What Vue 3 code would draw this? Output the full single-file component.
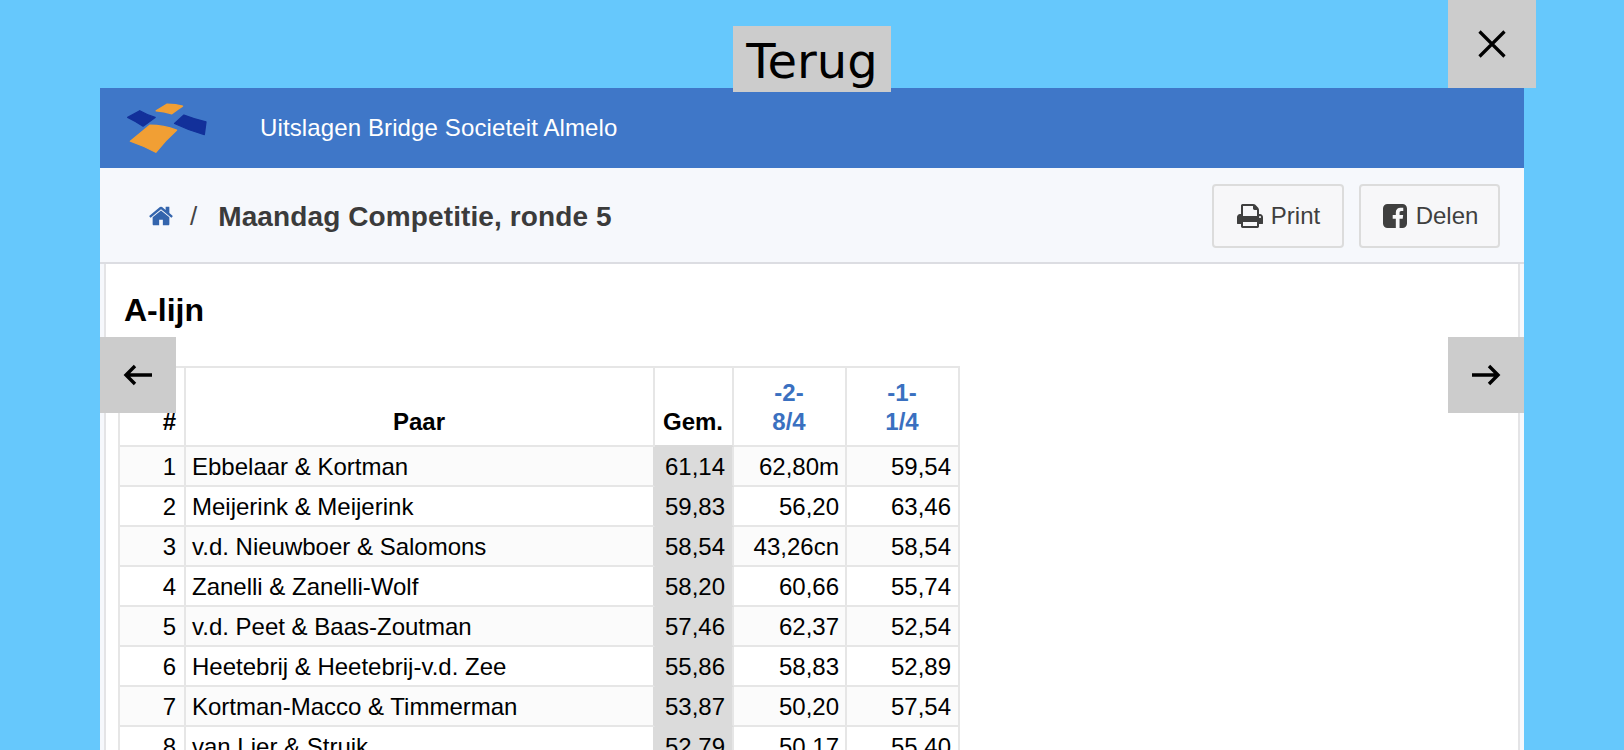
<script setup>
const rows = [
  [1, 'Ebbelaar & Kortman', '61,14', '62,80m', '59,54'],
  [2, 'Meijerink & Meijerink', '59,83', '56,20', '63,46'],
  [3, 'v.d. Nieuwboer & Salomons', '58,54', '43,26cn', '58,54'],
  [4, 'Zanelli & Zanelli-Wolf', '58,20', '60,66', '55,74'],
  [5, 'v.d. Peet & Baas-Zoutman', '57,46', '62,37', '52,54'],
  [6, 'Heetebrij & Heetebrij-v.d. Zee', '55,86', '58,83', '52,89'],
  [7, 'Kortman-Macco & Timmerman', '53,87', '50,20', '57,54'],
  [8, 'van Lier & Struik', '52,79', '50,17', '55,40'],
]
</script>

<template>
  <div class="page">
    <div class="panel">
      <header class="top">
        <svg class="logo" viewBox="100 60 260 170" aria-hidden="true">
          <g stroke-width="4" stroke-linejoin="round">
            <path fill="#f19f34" stroke="#f19f34" d="M199 92 L232 72 Q258 72 278 78 Q262 88 246 101 Q222 94 199 92Z" />
            <path fill="#12309a" stroke="#12309a" d="M114 112 L150 92 Q175 106 196 112 L160 138 Q135 122 114 112Z" />
            <path fill="#12309a" stroke="#12309a" d="M254 130 L282 105 Q315 118 348 125 L343 163 Q295 150 254 130Z" />
            <path fill="#f19f34" stroke="#f19f34" d="M122 183 Q150 160 180 135 Q222 135 260 150 Q228 178 198 216 Q158 195 122 183Z" />
          </g>
        </svg>
        <span class="site">Uitslagen Bridge Societeit Almelo</span>
      </header>
      <nav class="crumbs">
        <svg class="home" viewBox="0 0 1792 1792" aria-hidden="true"><path fill="currentColor" d="M1472 992v480q0 26-19 45t-45 19h-384v-384h-256v384h-384q-26 0-45-19t-19-45v-480q0-1 .5-3t.5-3l575-474 575 474q1 2 1 6zm223-69l-62 74q-8 9-21 11h-3q-13 0-21-7l-692-577-692 577q-12 8-24 7-13-2-21-11l-62-74q-8-10-7-23.500t11-21.500l719-599q32-26 76-26t76 26l244 204v-195q0-14 9-23t23-9h192q14 0 23 9t9 23v408l219 182q10 8 11 21.500t-7 23.500z"/></svg>
        <span class="sep">/</span>
        <strong class="title">Maandag Competitie, ronde 5</strong>
        <div class="actions">
          <button class="btn print">
            <svg viewBox="0 0 1792 1792" aria-hidden="true"><path fill="currentColor" d="M448 1536h896v-256h-896v256zm0-640h896v-384h-160q-40 0-68-28t-28-68v-160h-640v640zm1152 64q0-26-19-45t-45-19-45 19-19 45 19 45 45 19 45-19 19-45zm128 0v416q0 13-9.500 22.500t-22.500 9.500h-224v160q0 40-28 68t-68 28h-960q-40 0-68-28t-28-68v-160h-224q-13 0-22.500-9.500t-9.500-22.500v-416q0-79 56.500-135.500t135.500-56.500h64v-544q0-40 28-68t68-28h672q40 0 88 20t76 48l152 152q28 28 48 76t20 88v256h64q79 0 135.500 56.500t56.500 135.500z"/></svg>
            Print
          </button>
          <button class="btn delen">
            <svg viewBox="0 0 1792 1792" aria-hidden="true"><path fill="currentColor" d="M1376 128q119 0 203.500 84.500t84.500 203.500v960q0 119-84.500 203.500t-203.500 84.500h-188v-595h199l30-232h-229v-148q0-56 23.500-84t91.500-28l122-1v-207q-63-9-178-9-136 0-217.500 80t-81.500 226v171h-200v232h200v595h-532q-119 0-203.500-84.500t-84.500-203.500v-960q0-119 84.500-203.500t203.500-84.500h960z"/></svg>
            Delen
          </button>
        </div>
      </nav>
      <main class="frame">
        <div class="content">
          <h2 class="lijn">A-lijn</h2>
          <table class="results">
            <colgroup>
              <col class="c-nr" /><col class="c-paar" /><col class="c-gem" /><col class="c-r2" /><col class="c-r1" />
            </colgroup>
            <thead>
              <tr>
                <th class="nr">#</th>
                <th class="paar">Paar</th>
                <th class="gemh">Gem.</th>
                <th class="round">-2-<br />8/4</th>
                <th class="round">-1-<br />1/4</th>
              </tr>
            </thead>
            <tbody>
              <tr v-for="r in rows" :key="r[0]">
                <td class="num nr">{{ r[0] }}</td>
                <td class="paar">{{ r[1] }}</td>
                <td class="num gem">{{ r[2] }}</td>
                <td class="num r2">{{ r[3] }}</td>
                <td class="num">{{ r[4] }}</td>
              </tr>
            </tbody>
          </table>
        </div>
      </main>
    </div>

    <button class="terug">Terug</button>
    <button class="ctl close" aria-label="Sluiten">
      <svg viewBox="0 0 30 30" aria-hidden="true"><path d="M2.500 2.500 L27.500 27.500 M27.500 2.500 L2.500 27.500" fill="none" stroke="#000" stroke-width="3.200" /></svg>
    </button>
    <button class="ctl prev" aria-label="Vorige">
      <svg viewBox="0 0 30 22" aria-hidden="true"><path d="M29 11 H3 M12 2 L3 11 L12 20" fill="none" stroke="#000" stroke-width="3.400" /></svg>
    </button>
    <button class="ctl next" aria-label="Volgende">
      <svg viewBox="0 0 30 22" aria-hidden="true"><path d="M1 11 H27 M18 2 L27 11 L18 20" fill="none" stroke="#000" stroke-width="3.400" /></svg>
    </button>
  </div>
</template>

<style>
html, body { margin: 0; height: 100%; overflow: hidden; background: #66c8fc; }
</style>

<style scoped>
.page {
  position: relative;
  height: 750px;
  overflow: hidden;
  background: #66c8fc;
  padding-top: 88px;
  box-sizing: border-box;
  font-family: "Liberation Sans", Arial, sans-serif;
}
.panel {
  margin: 0 100px;
  background: #f6f8fc;
  height: 700px;
}
.top {
  height: 80px;
  background: #3f77c8;
  display: flex;
  align-items: center;
  padding-left: 23px;
  box-sizing: border-box;
}
.logo {
  width: 87px;
  height: 57px;
}
.site {
  margin-left: 50px;
  color: #fff;
  font-size: 24px;
  letter-spacing: 0.12px;
}
.crumbs {
  height: 96px;
  display: flex;
  align-items: center;
  box-sizing: border-box;
  border-bottom: 2px solid #dcdde2;
  padding: 2px 24px 0 48px;
}
.home {
  width: 26px;
  height: 26px;
  color: #3465ad;
}
.sep {
  margin-left: 16px;
  font-size: 26px;
  color: #444;
}
.title {
  margin: 2px 0 0 21px;
  font-size: 28px;
  letter-spacing: 0.11px;
  color: #3b3b3b;
}
.actions {
  margin-left: auto;
  display: flex;
  gap: 15px;
}
.btn {
  height: 64px;
  display: flex;
  align-items: center;
  justify-content: center;
  gap: 7px;
  box-sizing: border-box;
  border: 2px solid #dcdcdc;
  border-radius: 4px;
  background: #f7f7f9;
  color: #3f3f3f;
  font-family: inherit;
  font-size: 24px;
  padding: 0;
}
.btn svg { width: 28px; height: 28px; }
.print { width: 132px; }
.delen { width: 141px; }
.frame {
  margin: 0 4px;
  border-left: 2px solid #e4e4e6;
  border-right: 2px solid #e4e4e6;
  background: #fff;
  height: 486px;
  overflow: hidden;
}
.content { padding-left: 12px; }
.lijn {
  margin: 0;
  padding: 28px 0 0 6px;
  height: 74px;
  box-sizing: content-box;
  font-size: 32px;
  line-height: 36px;
  color: #000;
}
.results {
  border-collapse: separate;
  border-spacing: 0;
  border-top: 2px solid #e6e6e6;
  border-left: 2px solid #e6e6e6;
  table-layout: fixed;
  width: 842px;
  font-size: 24px;
  color: #000;
}
.c-nr { width: 66px; }
.c-paar { width: 469px; }
.c-gem { width: 79px; }
.c-r2 { width: 113px; }
.c-r1 { width: 113px; }
.results th,
.results td {
  border-right: 2px solid #e6e6e6;
  border-bottom: 2px solid #e6e6e6;
  padding: 0 7px 0 6px;
}
.results th {
  height: 68px;
  vertical-align: bottom;
  font-size: 24px;
  line-height: 29px;
  padding-bottom: 9px;
  background: #fff;
}
.results th.nr { text-align: right; padding-right: 8px; }
.results th.round { color: #3a70c0; }
.results td {
  height: 36px;
  line-height: 36px;
  padding-top: 2px;
  white-space: nowrap;
}
.results td.nr { padding-right: 8px; }
.results td.r2 { padding-right: 6px; }
.results tbody tr:nth-child(odd) td { background: #fbfbfb; }
.results td.num { text-align: right; }
.results tbody tr td.paar { border-right-color: #dbdbdb; }
.results tbody tr td.gem {
  background: #dbdbdb;
  border-bottom-color: #dbdbdb;
}
.results th.gemh { border-bottom-color: #dbdbdb; }
.terug {
  position: absolute;
  left: 733px;
  top: 26px;
  width: 158px;
  height: 66px;
  padding: 4px 0 0;
  border: 0;
  background: #ccc;
  color: #000;
  font-family: "DejaVu Sans", sans-serif;
  font-size: 48px;
  line-height: 56px;
}
.ctl {
  position: absolute;
  padding: 0;
  border: 0;
  background: #ccc;
  display: flex;
  align-items: center;
  justify-content: center;
}
.close { left: 1448px; top: 0; width: 88px; height: 88px; }
.close svg { width: 30px; height: 30px; }
.prev { left: 100px; top: 337px; width: 76px; height: 76px; }
.next { left: 1448px; top: 337px; width: 76px; height: 76px; }
.prev svg, .next svg { width: 30px; height: 22px; }
</style>
